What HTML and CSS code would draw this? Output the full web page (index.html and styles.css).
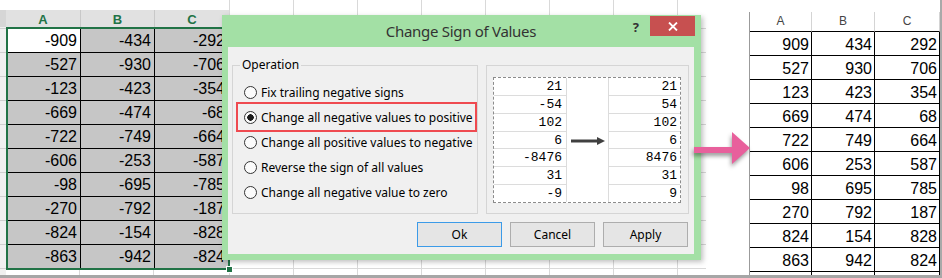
FILE: index.html
```html
<!DOCTYPE html>
<html lang="en">
<head>
  <meta charset="UTF-8">
  <meta name="viewport" content="width=device-width, initial-scale=1.0">
  <title>Change Sign of Values</title>
  <link rel="stylesheet" href="styles.css">
</head>
<body>
  <div class="canvas">
    <!-- 原始表格 -->
    <div class="sheet">
      <div class="sheet_top"></div>
      <div class="sheet_head">
        <div class="corner"></div>
        <div class="col_head col_a">A</div>
        <div class="col_head col_b">B</div>
        <div class="col_head col_c">C</div>
      </div>
      <div class="sheet_body">
        <div class="row_heads"></div>
        <div class="sel_col">
          <div class="selection">
            <div class="cell active">-909</div><div class="cell">-434</div><div class="cell">-292</div>
            <div class="cell">-527</div><div class="cell">-930</div><div class="cell">-706</div>
            <div class="cell">-123</div><div class="cell">-423</div><div class="cell">-354</div>
            <div class="cell">-669</div><div class="cell">-474</div><div class="cell">-68</div>
            <div class="cell">-722</div><div class="cell">-749</div><div class="cell">-664</div>
            <div class="cell">-606</div><div class="cell">-253</div><div class="cell">-587</div>
            <div class="cell">-98</div><div class="cell">-695</div><div class="cell">-785</div>
            <div class="cell">-270</div><div class="cell">-792</div><div class="cell">-187</div>
            <div class="cell">-824</div><div class="cell">-154</div><div class="cell">-828</div>
            <div class="cell">-863</div><div class="cell">-942</div><div class="cell">-824</div>
            <i class="fill_handle"></i>
          </div>
          <div class="below">
            <span></span><span></span><span></span>
          </div>
        </div>
        <div class="sheet_rest"></div>
      </div>
    </div>

    <!-- 结果表格 -->
    <div class="result">
      <div class="r_head">A</div><div class="r_head">B</div><div class="r_head">C</div>
      <div class="r_cell">909</div><div class="r_cell">434</div><div class="r_cell">292</div>
      <div class="r_cell">527</div><div class="r_cell">930</div><div class="r_cell">706</div>
      <div class="r_cell">123</div><div class="r_cell">423</div><div class="r_cell">354</div>
      <div class="r_cell">669</div><div class="r_cell">474</div><div class="r_cell">68</div>
      <div class="r_cell">722</div><div class="r_cell">749</div><div class="r_cell">664</div>
      <div class="r_cell">606</div><div class="r_cell">253</div><div class="r_cell">587</div>
      <div class="r_cell">98</div><div class="r_cell">695</div><div class="r_cell">785</div>
      <div class="r_cell">270</div><div class="r_cell">792</div><div class="r_cell">187</div>
      <div class="r_cell">824</div><div class="r_cell">154</div><div class="r_cell">828</div>
      <div class="r_cell">863</div><div class="r_cell">942</div><div class="r_cell">824</div>
      <div class="r_cell"></div><div class="r_cell"></div><div class="r_cell"></div>
    </div>

    <!-- 对话框 -->
    <div class="dialog">
      <div class="dialog_title">
        <div class="title_text">Change Sign of Values</div>
        <div class="title_btns">
          <span class="help">?</span>
          <span class="close">
            <svg width="10" height="9" viewBox="0 0 10 9">
              <path d="M1 0.5 L9 8.5 M9 0.5 L1 8.5" stroke="#fff" stroke-width="1.8"/>
            </svg>
          </span>
        </div>
      </div>
      <div class="dialog_body">
        <div class="groups">
          <fieldset class="operation">
            <legend>Operation</legend>
            <label class="opt"><input type="radio" name="op">Fix trailing negative signs</label>
            <label class="opt marked"><input type="radio" name="op" checked>Change all negative values to positive</label>
            <label class="opt"><input type="radio" name="op">Change all positive values to negative</label>
            <label class="opt"><input type="radio" name="op">Reverse the sign of all values</label>
            <label class="opt"><input type="radio" name="op">Change all negative value to zero</label>
          </fieldset>
          <div class="preview">
            <div class="pv_table">
              <div class="pv_col">
                <span>21</span><span>-54</span><span>102</span><span>6</span><span>-8476</span><span>31</span><span>-9</span>
              </div>
              <div class="pv_mid">
                <svg width="34" height="10" viewBox="0 0 34 10">
                  <path d="M0 5 H27" stroke="#404040" stroke-width="3"/>
                  <polygon points="26,1 34,5 26,9" fill="#404040"/>
                </svg>
              </div>
              <div class="pv_col after">
                <span>21</span><span>54</span><span>102</span><span>6</span><span>8476</span><span>31</span><span>9</span>
              </div>
            </div>
          </div>
        </div>
        <div class="buttons">
          <button class="btn default">Ok</button>
          <button class="btn">Cancel</button>
          <button class="btn">Apply</button>
        </div>
      </div>
    </div>

    <!-- 粉色箭头 -->
    <svg class="pink_arrow" width="60" height="44" viewBox="0 0 60 44">
      <path d="M2 21 H42 V27 H2 Z" fill="#e8609c"/>
      <polygon points="40,6 58,22 40,38" fill="#e8609c"/>
    </svg>
  </div>
</body>
</html>
```

FILE: styles.css
```css
* {
  margin: 0;
  padding: 0;
  box-sizing: border-box;
}
body {
  font-family: "Liberation Sans", Arial, sans-serif;
  background: #fff;
}
.canvas {
  position: relative;
  display: flex;
  width: 942px;
  height: 278px;
  overflow: hidden;
  background: #fff;
  border-right: 2px solid #a9a9a9;
  border-bottom: 3px solid #a6a6a6;
}

/* 左边表格 */
.sheet {
  width: 706px;
  flex-shrink: 0;
  background-image: linear-gradient(to right, #fff 229px, transparent 229px),
    linear-gradient(to right, #d9d9d9 1px, transparent 1px);
  background-size: 100% 100%, 64px 100%;
  background-position: 0 0, 37px 0;
  background-repeat: no-repeat, repeat;
}
.sheet_top {
  height: 10px;
}
.sheet_head {
  display: flex;
  height: 17px;
}
.corner {
  width: 6px;
  background: #d6d6d6;
}
.col_head {
  background: #e1e1e1;
  border-right: 1px solid #c8c8c8;
  color: #217346;
  font-weight: bold;
  font-size: 13px;
  text-align: center;
  line-height: 19px;
}
.col_a {
  width: 75px;
}
.col_b {
  width: 74px;
}
.col_c {
  width: 74px;
  border-right: 0;
}
.sheet_body {
  display: flex;
  height: 248px;
}
.row_heads {
  width: 6px;
  background-color: #f0f0f0;
  background-image: linear-gradient(#cfcfcf 1px, transparent 1px);
  background-size: 100% 24px;
  background-position: 0 1px;
}
.sel_col {
  display: flex;
  flex-direction: column;
}
.selection {
  position: relative;
  display: grid;
  grid-template-columns: 73px 74px 73px;
  grid-template-rows: repeat(9, 24px) 23px;
  border: 2px solid #217346;
}
.cell {
  background: #c6c6c6;
  border-right: 1px solid #000;
  border-bottom: 1px solid #000;
  font-size: 16px;
  text-align: right;
  padding-right: 3px;
  line-height: 23px;
}
.cell:nth-child(3n) {
  border-right: 0;
}
.cell:nth-child(n+28) {
  border-bottom: 0;
}
.active {
  background: #fff;
}
.fill_handle {
  position: absolute;
  right: -5px;
  bottom: -5px;
  width: 7px;
  height: 7px;
  background: #217346;
  border: 1px solid #fff;
}
.below {
  flex: 1;
  display: flex;
}
.below span {
  width: 74px;
  border-right: 1px solid #d9d9d9;
}
.below span:last-child {
  width: 76px;
}
.sheet_rest {
  flex: 1;
  background-image: linear-gradient(#d9d9d9 1px, transparent 1px);
  background-size: 100% 24px;
  background-position: 0 1px;
}

/* 右边结果 */
.result {
  align-self: flex-start;
  margin-left: auto;
  margin-top: 12px;
  width: 191px;
  display: grid;
  grid-template-columns: 62px 63px 65px;
  grid-template-rows: 20px repeat(11, 24px);
  border-left: 1px solid #9b9b9b;
}
.r_head {
  border-right: 1px solid #d4d4d4;
  border-bottom: 1px solid #000;
  font-size: 12px;
  color: #444;
  text-align: center;
  line-height: 19px;
}
.r_cell {
  border-right: 1px solid #000;
  border-bottom: 1px solid #000;
  font-size: 16px;
  text-align: right;
  padding: 2px 2px 0 0;
  line-height: 21px;
}

/* 对话框 */
.dialog {
  position: absolute;
  left: 222px;
  top: 15px;
  width: 479px;
  height: 245px;
  display: flex;
  flex-direction: column;
  padding: 0 7px 6px 6px;
  background: #a3e0a5;
  box-shadow: 2px 2px 5px rgba(0, 0, 0, .25);
  font-family: "Noto Sans", "Liberation Sans", sans-serif;
  font-size: 12px;
  color: #000;
}
.dialog_title {
  height: 32px;
  display: grid;
  grid-template-columns: 1fr auto 1fr;
}
.title_text {
  grid-column: 2;
  align-self: center;
  font-size: 15px;
  letter-spacing: -0.3px;
  color: #333;
}
.title_btns {
  grid-column: 3;
  justify-self: end;
  display: flex;
  align-items: flex-start;
  padding-top: 1px;
  margin-right: -1px;
}
.help {
  font-weight: bold;
  font-size: 13px;
  line-height: 16px;
  margin: 3px 11px 0 0;
  color: #333;
}
.close {
  width: 45px;
  height: 20px;
  background: #c75050;
  display: flex;
  align-items: center;
  justify-content: center;
}
.dialog_body {
  flex: 1;
  background: #f0f0f0;
  padding: 10px 5px 7px 4px;
  display: flex;
  flex-direction: column;
}
.groups {
  display: flex;
  align-items: flex-end;
  gap: 8px;
  height: 157px;
}
.operation {
  width: 246px;
  height: 157px;
  min-width: 0;
  border: 1px solid #d5d5d5;
  padding: 7px 0 0 3px;
}
.operation legend {
  font-size: 12px;
  line-height: 16px;
  padding: 0 2px;
  margin-left: 4px;
}
.opt {
  display: flex;
  align-items: center;
  gap: 4px;
  height: 25px;
  padding-left: 8px;
  white-space: nowrap;
}
.opt input {
  appearance: none;
  -webkit-appearance: none;
  width: 13px;
  height: 13px;
  margin: 0;
  border: 1px solid #333;
  border-radius: 50%;
  background: #fbfbfb;
}
.opt input:checked {
  background: radial-gradient(circle, #1c1c1c 0 3px, #fbfbfb 3.5px);
}
.marked {
  height: 30px;
  margin: -3px 0 -2px;
  border: 2px solid #ef4a50;
  padding-left: 6px;
}
.preview {
  width: 203px;
  height: 149px;
  border: 1px solid #d5d5d5;
  padding: 11px 7px 10px 6px;
}
.pv_table {
  height: 100%;
  display: flex;
  border: 1px dashed #8c8c8c;
  background: #fff;
}
.pv_col {
  width: 73px;
  display: flex;
  flex-direction: column;
  border-right: 1px solid #dcdcdc;
}
.pv_col.after {
  width: 72px;
  border-right: 0;
  border-left: 1px solid #dcdcdc;
}
.pv_col span {
  flex: 1;
  display: flex;
  align-items: center;
  justify-content: flex-end;
  padding-right: 4px;
  border-bottom: 1px solid #dcdcdc;
  font: 13px "Liberation Mono", monospace;
}
.pv_col.after span {
  padding-right: 3px;
}
.pv_col span:last-child {
  border-bottom: 0;
}
.pv_mid {
  flex: 1;
  display: flex;
  align-items: center;
  justify-content: center;
  padding-top: 2px;
}
.buttons {
  display: flex;
  justify-content: flex-end;
  gap: 8px;
  margin-top: 8px;
  padding-right: 1px;
}
.btn {
  width: 85px;
  height: 25px;
  border: 1px solid #adadad;
  background: #e5e5e5;
  font: 12px "Noto Sans", "Liberation Sans", sans-serif;
  color: #000;
}
.btn.default {
  border-color: #3c9be8;
}

/* 粉色箭头 */
.pink_arrow {
  position: absolute;
  left: 692px;
  top: 126px;
  filter: drop-shadow(-1px 3px 2px rgba(0, 0, 0, .4));
}
```
